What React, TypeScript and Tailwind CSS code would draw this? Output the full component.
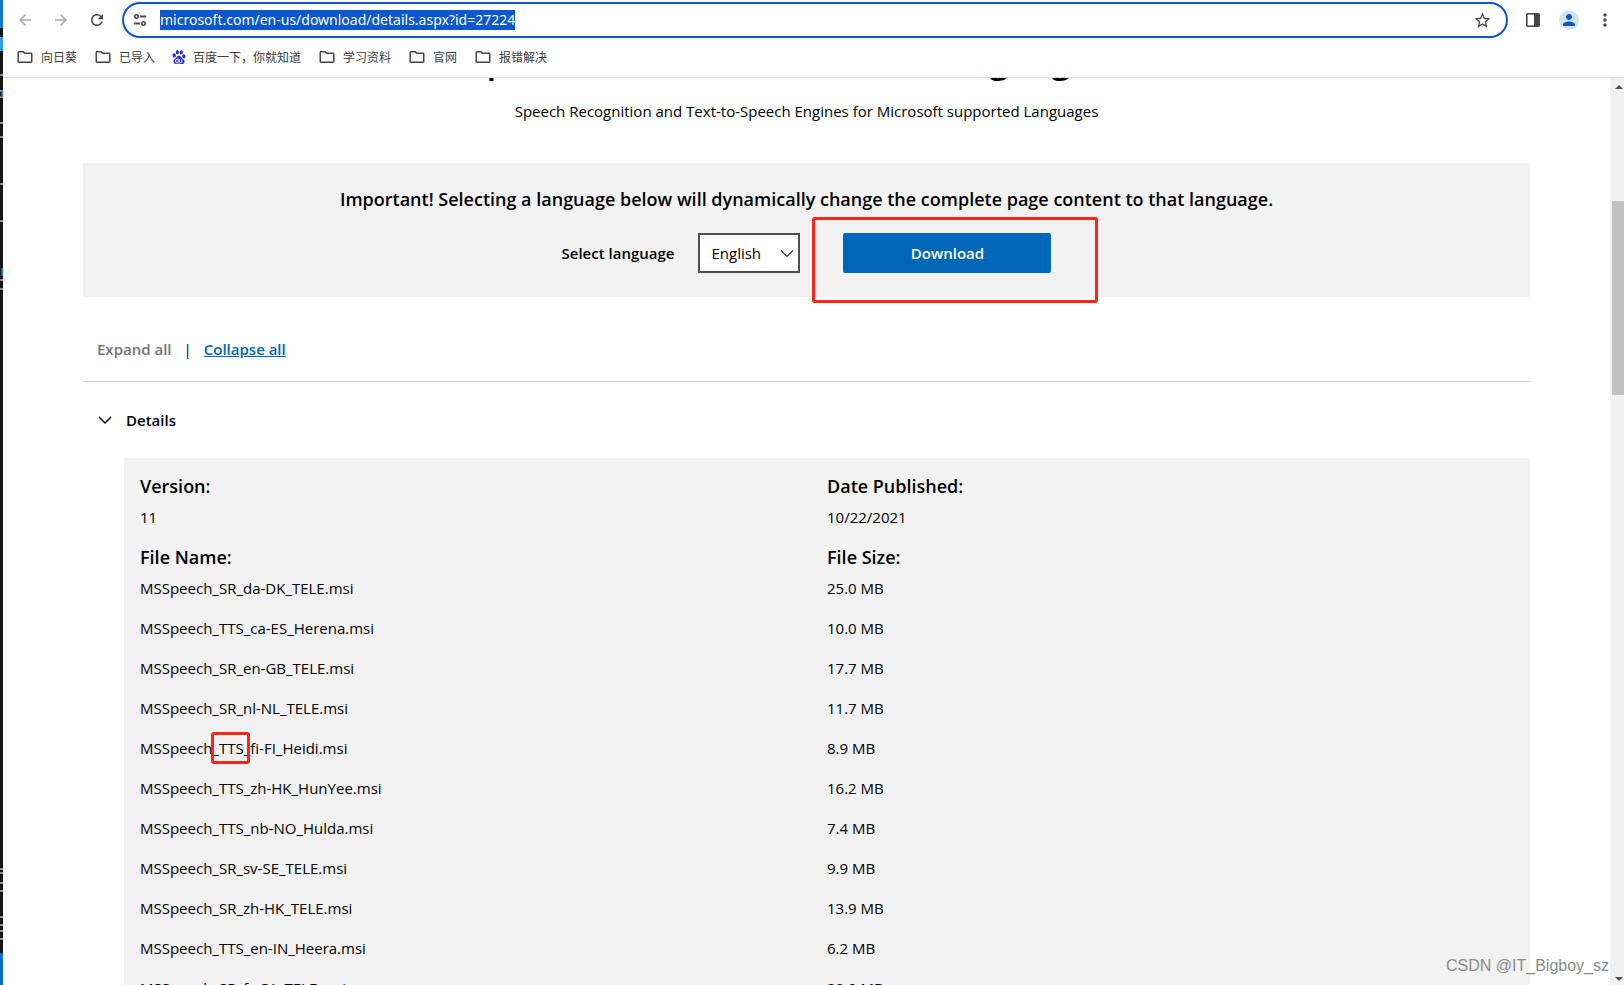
import React from 'react';
import {
  MdArrowBack,
  MdArrowForward,
  MdMoreVert,
  MdOutlineFolder,
  MdPerson,
  MdRefresh,
  MdStarBorder,
} from 'react-icons/md';
import { SiBaidu } from 'react-icons/si';

interface Bookmark {
  title: string;
  baidu?: boolean;
}

interface DownloadFile {
  name: string;
  size: string;
  marked?: boolean;
}

const bookmarks: Bookmark[] = [
  { title: '向日葵' },
  { title: '已导入' },
  { title: '百度一下，你就知道', baidu: true },
  { title: '学习资料' },
  { title: '官网' },
  { title: '报错解决' },
];

const files: DownloadFile[] = [
  { name: 'MSSpeech_SR_da-DK_TELE.msi', size: '25.0 MB' },
  { name: 'MSSpeech_TTS_ca-ES_Herena.msi', size: '10.0 MB' },
  { name: 'MSSpeech_SR_en-GB_TELE.msi', size: '17.7 MB' },
  { name: 'MSSpeech_SR_nl-NL_TELE.msi', size: '11.7 MB' },
  { name: 'MSSpeech_TTS_fi-FI_Heidi.msi', size: '8.9 MB', marked: true },
  { name: 'MSSpeech_TTS_zh-HK_HunYee.msi', size: '16.2 MB' },
  { name: 'MSSpeech_TTS_nb-NO_Hulda.msi', size: '7.4 MB' },
  { name: 'MSSpeech_SR_sv-SE_TELE.msi', size: '9.9 MB' },
  { name: 'MSSpeech_SR_zh-HK_TELE.msi', size: '13.9 MB' },
  { name: 'MSSpeech_TTS_en-IN_Heera.msi', size: '6.2 MB' },
  { name: 'MSSpeech_SR_fr-CA_TELE.msi', size: '20.9 MB' },
];

function Toolbar() {
  return (
    <div className="flex h-10 items-center pr-2 pl-[9px] text-[#474747]">
      <button aria-label="Back" className="w-9 pl-1 text-[#a9a9a9]">
        <MdArrowBack size={18} />
      </button>
      <button aria-label="Forward" className="w-9 pl-1 text-[#a9a9a9]">
        <MdArrowForward size={18} />
      </button>
      <button aria-label="Reload" className="w-9 pl-1">
        <MdRefresh size={18} />
      </button>
      <div className="ml-0.5 flex h-9 flex-1 items-center rounded-full border-2 border-[#0b57d0] pl-2">
        <button aria-label="View site information" className="mr-3">
          <svg width="16" height="16" viewBox="0 0 16 16" fill="none" stroke="currentColor">
            <circle cx="4.5" cy="4.5" r="1.7" strokeWidth="1.6" />
            <path d="M8 4.5h6M2 11.5h6" strokeWidth="1.8" />
            <circle cx="11.5" cy="11.5" r="1.7" strokeWidth="1.6" />
          </svg>
        </button>
        <input
          aria-label="Address and search bar"
          readOnly
          value="microsoft.com/en-us/download/details.aspx?id=27224"
          className="field-sizing-content h-5 bg-[#0b57d0] pb-0.5 font-['Noto_Sans',sans-serif] text-[14px] text-white outline-none"
        />
        <button aria-label="Bookmark this tab" className="mr-[14px] ml-auto">
          <MdStarBorder size={19} />
        </button>
      </div>
      <button aria-label="Side panel" className="ml-[15px] w-5">
        <svg width="20" height="16" viewBox="0 0 20 16">
          <rect x="3.8" y="1.8" width="12.4" height="12.4" rx="1" fill="none" stroke="currentColor" strokeWidth="1.6" />
          <path d="M11 2h5v12h-5z" fill="currentColor" />
        </svg>
      </button>
      <button
        aria-label="Profile"
        className="ml-4 flex size-5 items-center justify-center rounded-full bg-[#d3e3fd] text-[#0b57d0]"
      >
        <MdPerson size={18} />
      </button>
      <button aria-label="Menu" className="mr-px ml-4">
        <MdMoreVert size={20} />
      </button>
    </div>
  );
}

function BookmarksBar() {
  return (
    <nav className="flex h-[37px] items-center gap-[18px] pb-[3px] pl-[14px] font-['Noto_Sans_CJK_SC',sans-serif] text-xs text-[#3c3c3c]">
      {bookmarks.map((b) =>
        b.baidu ? (
          <a key={b.title} href="#" className="-ml-px flex items-center gap-[7px]">
            <SiBaidu size={14} color="#2529d8" />
            {b.title}
          </a>
        ) : (
          <a key={b.title} href="#" className="flex items-center gap-2">
            <MdOutlineFolder size={18} className="-mx-px text-[#474747]" />
            {b.title}
          </a>
        )
      )}
    </nav>
  );
}

function LanguageSelector() {
  return (
    <section className="mt-10 flex h-[134px] flex-col items-center bg-[#f2f2f2] pt-[22px]">
      <p className="text-[18px] leading-7 font-semibold">
        Important! Selecting a language below will dynamically change the complete page content to that language.
      </p>
      <div className="mt-5 flex items-center">
        <label htmlFor="language" className="mr-6 text-[15px] font-semibold">
          Select language
        </label>
        <div className="relative mr-[43px]">
          <select
            id="language"
            className="h-10 w-[102px] appearance-none border-2 border-[#505050] bg-white pl-[11px] text-[15px]"
          >
            <option>English</option>
          </select>
          <svg className="pointer-events-none absolute top-4 right-[6px]" width="14" height="10" viewBox="0 0 14 10">
            <path d="M1 1.500l6 6 6-6" fill="none" stroke="#333" strokeWidth="1.100" />
          </svg>
        </div>
        <div className="relative">
          <button className="h-10 w-52 rounded-[2px] bg-[#0067b8] text-[15px] font-semibold text-white">
            Download
          </button>
          <div className="pointer-events-none absolute -top-4 -right-[47px] -bottom-[30px] -left-[31px] rounded-[3px] border-3 border-[#ff2418]" />
        </div>
      </div>
    </section>
  );
}

function FileName({ file }: { file: DownloadFile }) {
  if (!file.marked) return <>{file.name}</>;
  const [before, after] = file.name.split('_TTS');
  return (
    <>
      {before}
      <span className="relative">
        _TTS
        <span className="pointer-events-none absolute -inset-y-[6px] -right-[6px] -left-px rounded-[3px] border-3 border-[#ff2418]" />
      </span>
      {after}
    </>
  );
}

function Details() {
  return (
    <div className="ml-[41px] bg-[#f2f2f2] px-4 pt-3">
      <table className="w-full table-fixed text-left text-[15px]">
        <thead>
          <tr className="text-[18px] leading-8">
            <th className="font-semibold">Version:</th>
            <th className="font-semibold">Date Published:</th>
          </tr>
        </thead>
        <tbody className="leading-[30px]">
          <tr>
            <td className="pb-[9px]">11</td>
            <td className="pb-[9px]">10/22/2021</td>
          </tr>
          <tr className="text-[18px] leading-8">
            <th className="font-semibold">File Name:</th>
            <th className="font-semibold">File Size:</th>
          </tr>
          {files.map((file) => (
            <tr key={file.name}>
              <td className="pb-[10px]">
                <FileName file={file} />
              </td>
              <td className="pb-[10px]">{file.size}</td>
            </tr>
          ))}
        </tbody>
      </table>
    </div>
  );
}

function Scrollbar() {
  return (
    <div className="flex w-[14px] shrink-0 flex-col bg-[#f1f1f1]">
      <svg width="14" height="17" viewBox="0 0 14 17">
        <path d="M5 11l4-4 4 4z" fill="#505050" />
      </svg>
      <div className="mt-[106px] ml-[2px] h-[194px] bg-[#c1c1c1]" />
      <svg className="mt-auto" width="14" height="17" viewBox="0 0 14 17">
        <path d="M5 9l4 4 4-4z" fill="#505050" />
      </svg>
    </div>
  );
}

// sliver of the window behind the browser
function WindowBehind() {
  return (
    <div className="flex w-[3px] shrink-0 flex-col bg-[#141414]">
      <div className="h-7 bg-[#1277c4]" />
      <div className="mt-[9px] h-[14px] bg-[#2f9be8]" />
      <svg className="mt-[22px]" width="3" height="220" viewBox="0 0 3 220">
        <path d="M0 2h3M0 18h3M0 24h3M0 50h3M0 64h3M0 111h3M0 148h3M0 207h3M0 216h3" stroke="#8c8c8c" strokeWidth="2" />
        <path d="M2 18v6M2 195v8" stroke="#1277c4" strokeWidth="2" />
      </svg>
      <svg className="mt-auto mb-3" width="3" height="74" viewBox="0 0 3 74">
        <path d="M0 2h3M0 6h3M0 16h3M0 24h3M0 50h3M0 58h3M0 64h3M0 72h3" stroke="#8c8c8c" strokeWidth="2" />
      </svg>
      <div className="h-8 bg-[#0a6cc4]" />
    </div>
  );
}

export default function App() {
  return (
    <div className="relative flex h-screen overflow-hidden bg-white font-['Open_Sans',sans-serif] text-black">
      <WindowBehind />
      <div className="flex min-w-0 flex-1 flex-col">
        <header className="border-b border-[#dedede]">
          <Toolbar />
          <BookmarksBar />
        </header>
        <div className="flex min-h-0 flex-1">
          <main className="flex-1 overflow-hidden px-20">
            <div className="flex h-[3px] items-end justify-center overflow-hidden">
              <h1 className="text-[35px] leading-[42px] font-semibold whitespace-nowrap">
                Microsoft Speech Platform - Runtime Languages (Version 11)
              </h1>
            </div>
            <p className="mt-[18px] text-center text-[15px] leading-6">
              Speech Recognition and Text-to-Speech Engines for Microsoft supported Languages
            </p>
            <LanguageSelector />
            <div className="flex h-[85px] items-center gap-3 border-b border-[#d2d2d2] pt-5 pl-[14px] text-[15px]">
              <button className="font-semibold text-[#757575]">Expand all</button>
              <span>|</span>
              <button className="font-semibold text-[#0067b8] underline">Collapse all</button>
            </div>
            <button className="flex h-[76px] items-center gap-[14px] pl-[15px] text-[15px] font-semibold">
              <svg width="14" height="10" viewBox="0 0 14 10">
                <path d="M1 2l6 6 6-6" fill="none" stroke="#000" strokeWidth="1.500" />
              </svg>
              Details
            </button>
            <Details />
          </main>
          <Scrollbar />
        </div>
      </div>
      <div className="absolute right-[15px] bottom-[7px] font-['Liberation_Sans',sans-serif] text-[16px] leading-6 text-[#8a8a8a]">
        CSDN @IT_Bigboy_sz
      </div>
    </div>
  );
}
